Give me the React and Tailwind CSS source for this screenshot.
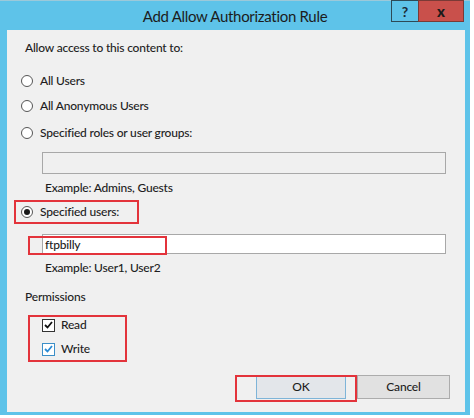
import React, { useState } from 'react';

const Radio = ({ checked }) => (
  <span className="w-[12px] h-[12px] rounded-full border border-[#555] bg-white flex items-center justify-center shrink-0">
    {checked && <span className="w-[6px] h-[6px] rounded-full bg-[#1a1a1a]" />}
  </span>
);

const Check = ({ blue }) => (
  <span
    className={`w-[13px] h-[13px] border bg-white flex items-center justify-center shrink-0 ${
      blue ? 'border-[#3c8fc8]' : 'border-[#333]'
    }`}
  >
    <svg width="9" height="8" viewBox="0 0 9 8">
      <path
        d="M1 4 L3.5 6.5 L8 1"
        fill="none"
        stroke={blue ? '#2a8ad4' : '#111'}
        strokeWidth="1.8"
      />
    </svg>
  </span>
);

export default function App() {
  const [users, setUsers] = useState('ftpbilly');

  return (
    <div className="w-[474px] h-[418px] bg-white" style={{ fontFamily: 'Lato, "Noto Sans", sans-serif' }}>
      <div className="w-[470px] h-[415px] bg-[#5ec3e9] flex flex-col border-t border-[#9cc9da]">
        {/* title bar */}
        <div className="relative h-[29px] flex items-center justify-center">
          <span className="text-[15px] tracking-[-0.3px] text-[#1c1c1c] pt-[2px]">Add Allow Authorization Rule</span>
          <div className="absolute top-[-1px] right-[6px] flex">
            <div className="w-[27px] h-[22px] border border-[#2d4a57] border-r-0 flex items-center justify-center text-[14px] font-bold text-[#1b2a38]">
              ?
            </div>
            <div className="w-[46px] h-[22px] bg-[#c9504b] border border-[#7a3a36] flex items-center justify-center text-[15px] font-black text-[#1a1a1a]">
              x
            </div>
          </div>
        </div>

        {/* content */}
        <div className="relative ml-[7px] mr-[5px] h-[382px] bg-[#f0f0f0] text-[12px] tracking-[-0.2px] font-medium text-[#1e1e1e] pl-[14px] pr-[19px]">
          <div className="h-[16px] mt-[10px] pl-[4px] flex items-center">Allow access to this content to:</div>

          <div className="h-[20px] mt-[15px] flex items-center gap-[7px]">
            <Radio />
            <span>All Users</span>
          </div>
          <div className="h-[20px] mt-[5px] flex items-center gap-[7px]">
            <Radio />
            <span>All Anonymous Users</span>
          </div>
          <div className="h-[20px] mt-[7px] flex items-center gap-[7px]">
            <Radio />
            <span>Specified roles or user groups:</span>
          </div>

          <div className="ml-[21px] mt-[9px] h-[22px] border border-[#a8a8a8] bg-[#f0f0f0]" />
          <div className="ml-[24px] mt-[6px] h-[16px] flex items-center">Example: Admins, Guests</div>

          <div className="h-[20px] mt-[6px] flex items-center gap-[7px]">
            <Radio checked />
            <span>Specified users:</span>
          </div>

          <input
            value={users}
            onChange={(e) => setUsers(e.target.value)}
            className="block w-[404px] ml-[21px] mt-[12px] h-[20px] border border-[#a8a8a8] bg-white px-[2px] text-[12px] font-medium outline-none"
          />
          <div className="ml-[24px] mt-[6px] h-[16px] flex items-center">Example: User1, User2</div>

          <div className="h-[16px] mt-[13px] pl-[4px] flex items-center">Permissions</div>

          <div className="h-[20px] mt-[10px] ml-[21px] flex items-center gap-[6px]">
            <Check />
            <span>Read</span>
          </div>
          <div className="h-[20px] mt-[4px] ml-[21px] flex items-center gap-[6px]">
            <Check blue />
            <span>Write</span>
          </div>

          <div className="mt-[16px] flex justify-end gap-[11px] -mr-[4px]">
            <button className="w-[90px] h-[24px] border border-[#7eb4d8] bg-[#e3e6ea] text-[12px] font-medium">OK</button>
            <button className="w-[93px] h-[24px] border border-[#acacac] bg-[#e1e1e1] text-[12px] font-medium">Cancel</button>
          </div>

          {/* annotation boxes */}
          <div className="absolute left-[7px] top-[170px] w-[125px] h-[24px] border-2 border-[#e3333b]" />
          <div className="absolute left-[21px] top-[206px] w-[139px] h-[19px] border-2 border-[#e3333b]" />
          <div className="absolute left-[21px] top-[285px] w-[99px] h-[47px] border-2 border-[#e3333b]" />
          <div className="absolute left-[228px] top-[345px] w-[122px] h-[27px] border-2 border-[#e3333b]" />
        </div>
      </div>
    </div>
  );
}
